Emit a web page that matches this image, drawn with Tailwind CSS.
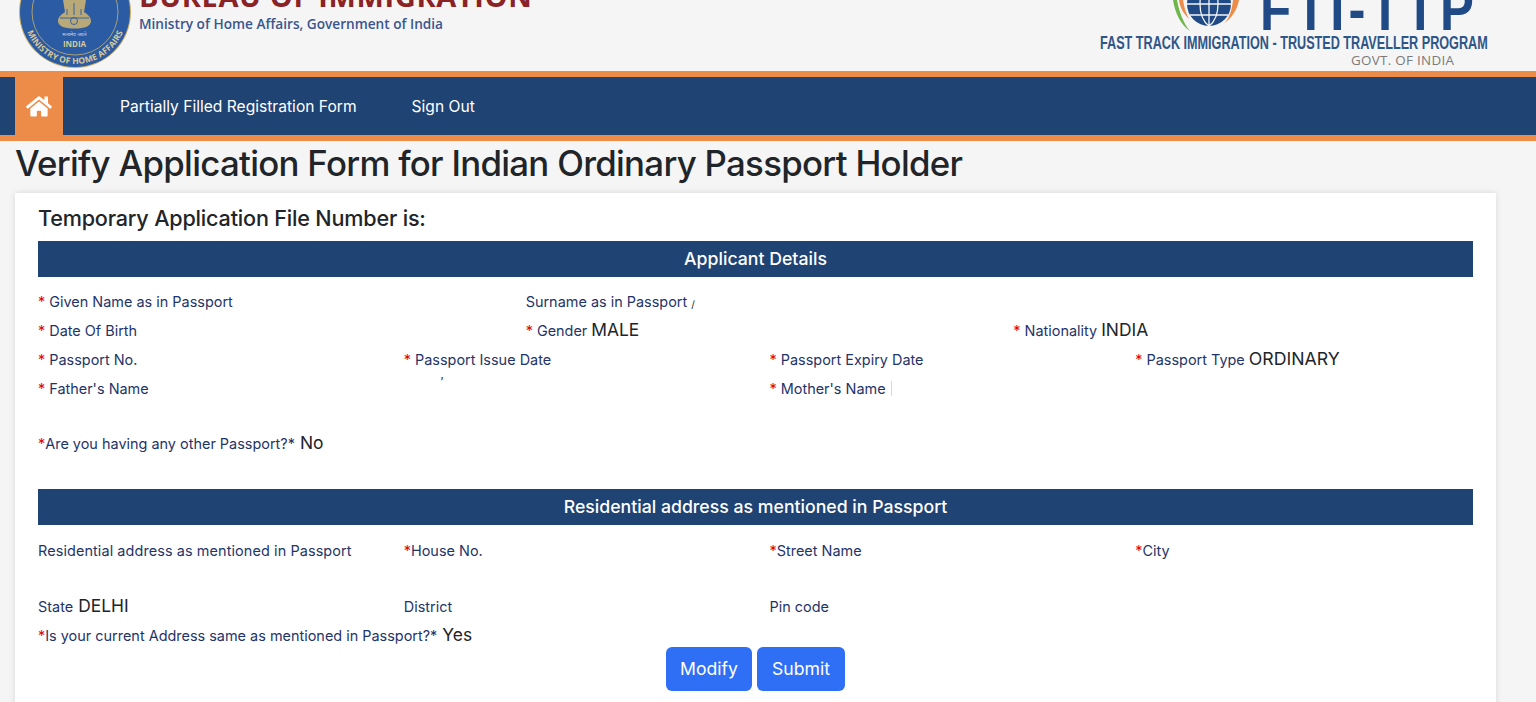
<!DOCTYPE html>
<html lang="en">
<head>
<meta charset="UTF-8">
<title>Verify Application Form</title>
<script src="https://cdn.jsdelivr.net/npm/@tailwindcss/browser@4"></script>
</head>
<body class="bg-[#f5f5f5] font-['Inter',sans-serif] text-[#212529] h-[702px] overflow-hidden">

<!-- top header with logos, cut off by the top of the window -->
<header class="h-[71px] overflow-hidden flex justify-between">
  <div class="flex ml-[19px] -mt-[44px]">
    <svg class="w-[112px] h-[112px] shrink-0" viewBox="0 0 112 112">
      <defs><path id="ring" d="M4 56a52 52 0 0 0 104 0"/></defs>
      <circle cx="56" cy="56" r="56" fill="#c9b06a"/>
      <circle cx="56" cy="56" r="55" fill="#2a5ba3"/>
      <circle cx="56" cy="56" r="43" fill="none" stroke="#c9b06a" stroke-width="0.8"/>
      <g fill="#b9a878">
        <path d="M44 44H67L65 56C70 59 72 62 72 65C72 70 66 72.500 56 72.500C45 72.500 39 70 39 65C39 62 41 59 46 56Z"/>
      </g>
      <g fill="none" stroke="#2a5ba3" stroke-width="0.9">
        <circle cx="55" cy="65" r="3.500"/>
        <path d="M41 62H70M48 53V59M55 47V59M62 53V59"/>
      </g>
      <text x="55.500" y="80" text-anchor="middle" font-size="5" fill="#cfd4e0" font-family="Noto Sans">सत्यमेव जयते</text>
      <text x="55.500" y="91" text-anchor="middle" font-size="8" font-weight="700" fill="#d8c998" font-family="Open Sans">INDIA</text>
      <text font-size="8.500" font-weight="700" fill="#d8c998" font-family="Open Sans" letter-spacing="0.1"><textPath href="#ring" startOffset="50%" text-anchor="middle">MINISTRY OF HOME AFFAIRS</textPath></text>
    </svg>
    <div class="ml-[8px] pt-[22px]">
      <div class="font-['Open_Sans',sans-serif] font-bold text-[29px] leading-[36px] tracking-[0.65px] text-[#8a2226] whitespace-nowrap">BUREAU OF IMMIGRATION</div>
      <div class="font-['Open_Sans',sans-serif] font-semibold text-[13.65px] leading-[17px] mt-[1px] text-[#3b5590] whitespace-nowrap">Ministry of Home Affairs, Government of India</div>
    </div>
  </div>
  <div class="relative w-[436px] shrink-0">
    <svg class="absolute left-[72px] top-0 w-[76px] h-[32px]" viewBox="0 0 76 32">
      <path d="M1 0C3 13 9 25 18 31C12 24 7 12 5 0Z" fill="#6fb64a"/>
      <path d="M7 0C8 8 12 14 17 19C14 13 12 7 11 0Z" fill="#ec8c48"/>
      <path d="M67 0C65 10 60 18 51 24C57 20 60 10 61 0Z" fill="#ec8c48"/>
      <circle cx="37" cy="4" r="22" fill="#1f4a86"/>
      <g stroke="#f5f5f5" stroke-width="1.3" fill="none">
        <path d="M15 4H59M18 15H56"/>
        <path d="M37 -18V26M37 26C25 17 25 -9 37 -18M37 26C49 17 49 -9 37 -18"/>
      </g>
    </svg>
    <div class="absolute left-[160px] -top-[18px] font-['Liberation_Sans',sans-serif] font-bold text-[62px] leading-[54px] tracking-[5px] text-[#1f4a86] whitespace-nowrap scale-x-[0.82] origin-left">FTI-TTP</div>
    <div class="absolute left-0 top-[33px] font-['Liberation_Sans',sans-serif] font-bold text-[18px] leading-[20px] text-[#2f5688] whitespace-nowrap origin-left scale-x-[0.702]">FAST TRACK IMMIGRATION - TRUSTED TRAVELLER PROGRAM</div>
    <div class="absolute left-[251px] top-[52px] font-['Open_Sans',sans-serif] text-[13.4px] leading-[16px] tracking-[0.3px] text-[#7a7a7a] whitespace-nowrap">GOVT. OF INDIA</div>
  </div>
</header>

<nav class="h-[70px] bg-[#1f4373] border-y-[6px] border-[#ec8c48] flex pl-[15px] text-white text-[15.6px]">
  <a class="w-[48px] bg-[#ec8c48] flex items-center justify-center">
    <svg class="w-[26px] h-[23px]" viewBox="0 0 576 512" fill="#fff"><path d="M280.37 148.26L96 300.11V464a16 16 0 0 0 16 16l112.06-.29a16 16 0 0 0 15.92-16V368a16 16 0 0 1 16-16h64a16 16 0 0 1 16 16v95.64a16 16 0 0 0 16 16.05L464 480a16 16 0 0 0 16-16V300L295.67 148.26a12.19 12.19 0 0 0-15.3 0zM571.6 251.47L488 182.56V44.05a12 12 0 0 0-12-12h-56a12 12 0 0 0-12 12v72.61L318.47 43a48 48 0 0 0-61 0L4.34 251.47a12 12 0 0 0-1.6 16.9l25.5 31A12 12 0 0 0 45.15 301l235.22-193.74a12.19 12.19 0 0 1 15.3 0L530.9 301a12 12 0 0 0 16.9-1.6l25.5-31a12 12 0 0 0-1.7-16.93z"/></svg>
  </a>
  <a class="ml-[57px] pt-[2px] flex items-center">Partially Filled Registration Form</a>
  <a class="ml-[55px] pt-[2px] flex items-center">Sign Out</a>
</nav>

<h1 class="pl-[15px] text-[34.8px] leading-[46px] font-medium -mt-[1px] tracking-[-0.7px]">Verify Application Form for Indian Ordinary Passport Holder</h1>

<main class="mx-[15px] mt-[7px] w-[1481px] bg-white shadow-[0_0_6px_rgba(0,0,0,0.12)] px-[23px] pt-[11px] h-[600px] text-[14.45px] text-[#1f3468]">
  <h2 class="text-[21.6px] leading-[28px] font-medium text-[#212529] tracking-[-0.19px]">Temporary Application File Number is:</h2>

  <div class="mt-[9px] h-[36px] bg-[#1f4373] text-white text-[17.7px] font-medium flex items-center justify-center">Applicant Details</div>

  <div class="mt-[11px] grid grid-cols-3 gap-x-[28px]">
    <div class="h-[28px] flex items-center"><span class="text-red-600 mr-[4px]">*</span>Given Name as in Passport</div>
    <div class="h-[28px] flex items-center">Surname as in Passport <span class="ml-[4px] text-[10px] leading-[10px] mt-[4px] text-[#212529]">/</span></div>
    <div></div>
    <div class="h-[29px] flex items-center"><span class="text-red-600 mr-[4px]">*</span>Date Of Birth</div>
    <div class="h-[29px] flex items-center"><span class="text-red-600 mr-[4px]">*</span>Gender <span class="ml-[4px] text-[17.4px] text-[#212529]">MALE</span></div>
    <div class="h-[29px] flex items-center"><span class="text-red-600 mr-[4px]">*</span>Nationality <span class="ml-[4px] text-[17.4px] text-[#212529]">INDIA</span></div>
  </div>
  <div class="grid grid-cols-4 gap-x-[28px]">
    <div class="h-[29px] flex items-center"><span class="text-red-600 mr-[4px]">*</span>Passport No.</div>
    <div class="h-[29px] flex items-center"><span class="text-red-600 mr-[4px]">*</span>Passport Issue Date</div>
    <div class="h-[29px] flex items-center"><span class="text-red-600 mr-[4px]">*</span>Passport Expiry Date</div>
    <div class="h-[29px] flex items-center"><span class="text-red-600 mr-[4px]">*</span>Passport Type <span class="ml-[4px] text-[17.7px] text-[#212529]">ORDINARY</span></div>
    <div class="h-[29px] flex items-center"><span class="text-red-600 mr-[4px]">*</span>Father's Name</div>
    <div class="h-[29px] flex items-start pl-[37px] text-[12px] leading-[16px] text-[#212529]">′</div>
    <div class="col-span-2 h-[29px] flex items-center"><span class="text-red-600 mr-[4px]">*</span>Mother's Name<span class="ml-[5px] w-px h-[15px] bg-[#d5d8de]"></span></div>
  </div>

  <div class="mt-[26px] h-[29px] flex items-center"><span class="text-red-600">*</span>Are you having any other Passport?* <span class="ml-[5px] text-[17.4px] text-[#212529]">No</span></div>

  <div class="mt-[31px] h-[36px] bg-[#1f4373] text-white text-[17.7px] font-medium flex items-center justify-center">Residential address as mentioned in Passport</div>

  <div class="mt-[12px] grid grid-cols-4 gap-x-[28px]">
    <div class="h-[28px] flex items-center whitespace-nowrap tracking-[0.09px]">Residential address as mentioned in Passport</div>
    <div class="h-[28px] flex items-center"><span class="text-red-600">*</span>House No.</div>
    <div class="h-[28px] flex items-center"><span class="text-red-600">*</span>Street Name</div>
    <div class="h-[28px] flex items-center"><span class="text-red-600">*</span>City</div>
    <div class="mt-[27px] h-[29px] flex items-center">State <span class="ml-[5px] text-[17.4px] text-[#212529]">DELHI</span></div>
    <div class="mt-[27px] h-[29px] flex items-center">District</div>
    <div class="mt-[27px] h-[29px] flex items-center">Pin code</div>
  </div>

  <div class="h-[29px] flex items-center"><span class="text-red-600">*</span>Is your current Address same as mentioned in Passport?* <span class="ml-[5px] text-[17.4px] text-[#212529]">Yes</span></div>

  <div class="-mt-[3px] flex justify-center gap-[5px] text-white text-[17.6px]">
    <button class="w-[86px] h-[44px] bg-[#2f6ff5] rounded-[6px]">Modify</button>
    <button class="w-[88px] h-[44px] bg-[#2f6ff5] rounded-[6px]">Submit</button>
  </div>
</main>

</body>
</html>
